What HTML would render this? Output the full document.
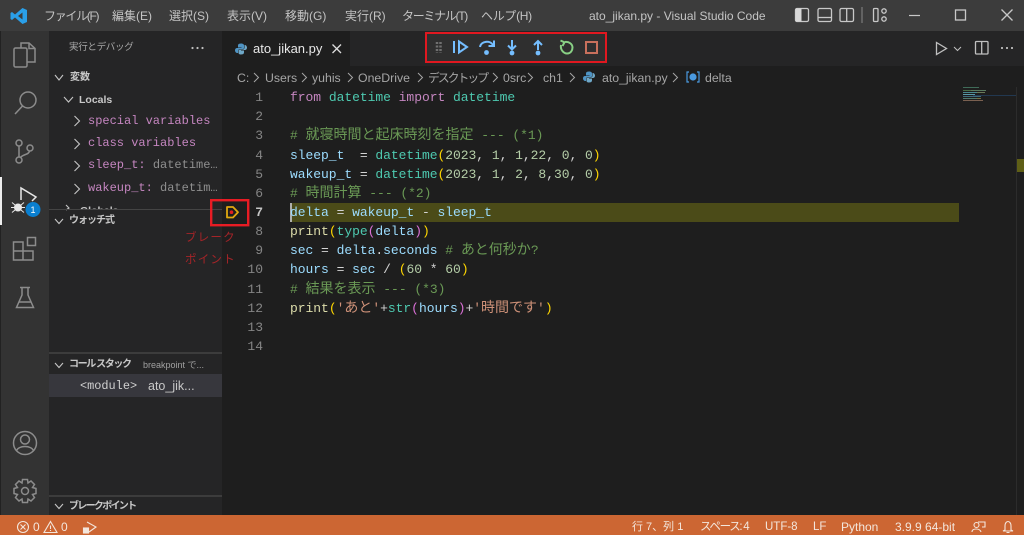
<!DOCTYPE html>
<html lang="ja"><head><meta charset="utf-8">
<style>
html,body{margin:0;padding:0;width:1024px;height:535px;overflow:hidden;background:#1e1e1e}
body{position:relative;font-family:"Liberation Sans","Noto Sans CJK JP",sans-serif;color:#ccc;filter:blur(.35px)}
.a{position:absolute;white-space:pre}
svg{position:absolute;overflow:visible}
.m{font-size:12px;color:#c4c4c4;top:8px;line-height:16px}
.code{position:absolute;left:290px;font:13px/19px "Liberation Mono","Noto Sans CJK JP",monospace;letter-spacing:-.04px;white-space:pre;color:#d4d4d4}
.j{font-size:14px;letter-spacing:0}
.ln{position:absolute;width:28px;left:235px;text-align:right;font:13px/19px "Liberation Mono",monospace;color:#858585}
.v{color:#9cdcfe}.t{color:#4ec9b0}.k{color:#c586c0}.c{color:#6a9955}.n{color:#b5cea8}.f{color:#dcdcaa}.s{color:#ce9178}.y{color:#ffd700}.p{color:#da70d6}
.tree{position:absolute;font:12px/18px "Liberation Mono",monospace;color:#c586c0;white-space:pre}
.h{position:absolute;font-size:10px;font-weight:bold;color:#c8c8c8;line-height:14px;white-space:pre}
.st{position:absolute;top:520px;font-size:11.5px;line-height:15px;color:#f3e6dc;white-space:pre}
.b{position:absolute;top:70px;font-size:12.3px;line-height:16px;color:#a6a6a6;white-space:pre}
</style></head><body>
<!-- panels -->
<div class="a" style="left:0;top:0;width:1024px;height:31px;background:#3c3c3c"></div>
<div class="a" style="left:0;top:31px;width:49px;height:484px;background:#333"></div>
<div class="a" style="left:49px;top:31px;width:173px;height:484px;background:#252526"></div>
<div class="a" style="left:222px;top:31px;width:802px;height:35px;background:#252526"></div>
<div class="a" style="left:222px;top:31px;width:128px;height:35px;background:#1e1e1e"></div>
<div class="a" style="left:0;top:31px;width:1px;height:484px;background:#222"></div>
<div class="a" style="left:0;top:177px;width:2px;height:48px;background:#eee"></div>
<div class="a" style="left:0;top:515px;width:1024px;height:20px;background:#cc6633"></div>
<!-- title -->
<svg style="left:10px;top:7px" width="18" height="18" viewBox="0 0 18 18"><path d="M12.5 1 L17 3 V15 L12.5 17 L5 10.5 L2 13 L0.5 12 V6 L2 5 L5 7.5Z M12.5 5.5 L8 9 L12.5 12.5Z" fill="#2a9fe8" fill-rule="evenodd"/></svg>
<div class="a m" style="left:44px;letter-spacing:-1.3px">ファイル(F)</div>
<div class="a m" style="left:112px">編集(E)</div>
<div class="a m" style="left:169px">選択(S)</div>
<div class="a m" style="left:227px">表示(V)</div>
<div class="a m" style="left:285px">移動(G)</div>
<div class="a m" style="left:345px">実行(R)</div>
<div class="a m" style="left:402px;letter-spacing:-1.3px">ターミナル(T)</div>
<div class="a m" style="left:481px;letter-spacing:-.3px">ヘルプ(H)</div>
<div class="a m" style="left:589px">ato_jikan.py - Visual Studio Code</div>
<svg style="left:794px;top:7px" width="230" height="20" fill="none" stroke="#c8c8c8" stroke-width="1.3">
<rect x="1.500" y="1.500" width="13" height="13" rx="1.500"/><rect x="1.500" y="1.500" width="6" height="13" fill="#d8d8d8" stroke="none"/>
<rect x="24" y="1.500" width="13.500" height="13" rx="1.500"/><path d="M24 10.500H37.500"/>
<rect x="46" y="1.500" width="13.500" height="13" rx="1.500"/><path d="M52.700 1.500V14.500"/>
<path d="M68 0V16" stroke="#777"/>
<rect x="79.500" y="1.500" width="4.500" height="13" rx="1"/><circle cx="90" cy="4" r="2.200"/><circle cx="90" cy="12" r="2.200"/>
<path d="M115 8.500H126" stroke-width="1.200"/>
<rect x="161.500" y="3" width="10" height="10" stroke-width="1.300"/>
<path d="M207.500 2.500L218.500 13.500M218.500 2.500L207.500 13.500" stroke-width="1.300"/></svg>
<!-- activity icons -->
<svg style="left:0;top:31px" width="49" height="485" fill="none" stroke="#8c8c8c" stroke-width="1.500">
<path d="M21 17V12H29L35 17.500V31H27"/><path d="M29 12V17.500H35"/><rect x="14" y="17" width="13" height="19" rx="1.500"/>
<circle cx="28" cy="69" r="8"/><path d="M22.500 75L15 83"/>
<circle cx="19" cy="112" r="3"/><circle cx="19" cy="129" r="3"/><circle cx="30" cy="117" r="3"/><path d="M19 115V126M29.500 120C29 124 23 123 20.500 126.500"/>
<path d="M13.500 229V211H23V220H33V229ZM13.500 220H33M23 220V229"/><rect x="27.500" y="206.500" width="8" height="8"/>
<path d="M22 256.500V264L16.500 276.500H33.500L28 264V256.500M20 256.500H30M19 271H31"/>
<circle cx="25" cy="412" r="11.500"/><circle cx="25" cy="408.500" r="4.500"/><path d="M16.500 420C18 414 32 414 33.500 420"/>
<circle cx="25" cy="460" r="3.500"/><path d="M22.500 448.500H27.500L28 452L31 450L34.500 453.500L32.500 456.500L36 457.500V462.500L32.500 463.500L34.500 466.500L31 470L28 468L27.500 471.500H22.500L22 468L19 470L15.500 466.500L17.500 463.500L14 462.500V457.500L17.500 456.500L15.500 453.500L19 450L22 452Z"/>
</svg>
<svg style="left:0;top:0" width="49" height="240" fill="none" stroke="#e8e8e8" stroke-width="1.500">
<path d="M21 200V188L36 197L32 201"/>
<circle cx="18" cy="207.500" r="4" fill="#e8e8e8" stroke="none"/><path d="M12 202.500L24 212.500M12 212.500L24 202.500M11 207.500H25" stroke-width="1"/>
<circle cx="33" cy="209.500" r="7.500" fill="#0a7fd0" stroke="none"/></svg>
<div class="a" style="left:29px;top:204px;width:8px;text-align:center;font-size:9px;line-height:12px;color:#fff">1</div>
<!-- sidebar -->
<div class="a" style="left:69px;top:41px;font-size:9.500px;line-height:14px;color:#a8a8a8;letter-spacing:-.3px">実行とデバッグ</div>
<svg style="left:191px;top:47px" width="14" height="3" fill="#c0c0c0"><circle cx="1.500" cy="1" r="1.100"/><circle cx="6.500" cy="1" r="1.100"/><circle cx="11.500" cy="1" r="1.100"/></svg>
<svg style="left:49px;top:60px" width="173" height="460" fill="none" stroke="#c5c5c5" stroke-width="1.100">
<path d="M6 15L10 20L14 15"/><path d="M15 37L19.500 42L24 37"/>
<path d="M25.500 56L30.500 61L25.500 66M25.500 79L30.500 84L25.500 89M25.500 101L30.500 106L25.500 111M25.500 124L30.500 129L25.500 134"/>
<path d="M17 145L20 148L17 150"/>
<path d="M6 159L10 163.500L14 159M6 303L10 307.500L14 303M6 444L10 448.500L14 444"/>
</svg>
<div class="h" style="left:70px;top:71px">変数</div>
<div class="h" style="left:79px;top:93px;font-size:10.500px">Locals</div>
<div class="tree" style="left:88px;top:112px">special variables</div>
<div class="tree" style="left:88px;top:134px">class variables</div>
<div class="tree" style="left:88px;top:156px">sleep_t: <span style="color:#8f8f8f">datetime…</span></div>
<div class="tree" style="left:88px;top:179px">wakeup_t: <span style="color:#8f8f8f">datetim…</span></div>
<div class="a" style="left:80px;top:204px;width:40px;height:5px;overflow:hidden;font-size:10.500px;font-weight:bold;line-height:14px;color:#c8c8c8">Globals</div>
<div class="a" style="left:49px;top:209px;width:173px;height:1px;background:#444"></div>
<div class="h" style="left:69px;top:214px;letter-spacing:-1px">ウォッチ式</div>
<div class="a" style="left:49px;top:352px;width:173px;height:2px;background:#3c3c3c"></div>
<div class="h" style="left:69px;top:358px;letter-spacing:-1.400px">コール スタック</div>
<div class="a" style="left:143px;top:358px;font-size:9px;line-height:14px;color:#a0a0a0">breakpoint で...</div>
<div class="a" style="left:49px;top:374px;width:173px;height:23px;background:#37373d"></div>
<div class="a" style="left:80px;top:378px;font:11.900px/16px 'Liberation Mono',monospace;color:#d0d0d0">&lt;module&gt;</div>
<div class="a" style="left:148px;top:378px;font-size:12.500px;line-height:16px;color:#c8c8c8">ato_jik...</div>
<div class="a" style="left:49px;top:495px;width:173px;height:2px;background:#3c3c3c"></div>
<div class="h" style="left:69px;top:500px;letter-spacing:-1.700px">ブレークポイント</div>
<!-- annotation -->
<div class="a" style="left:185px;top:230px;font-size:11.500px;line-height:16px;color:#a52428;letter-spacing:1.200px">ブレーク</div>
<div class="a" style="left:185px;top:252px;font-size:11.500px;line-height:16px;color:#a52428;letter-spacing:1.200px">ポイント</div>
<svg style="left:210px;top:199px" width="40" height="28" fill="none">
<rect x="1.200" y="1.200" width="37" height="25" stroke="#e81c24" stroke-width="2.400"/>
<path d="M17 8H23L28 13.200L23 18.500H17Z" stroke="#e0a810" stroke-width="1.800" stroke-linejoin="round"/><circle cx="21.500" cy="13.200" r="1.800" fill="#e02020"/></svg>
<!-- tab -->
<svg style="left:235px;top:43px" width="12" height="12"><path d="M6 0.500C3 0.500 3 2 3 3V4.500H6.500V5H2C.5 5 0 6.500 0 7.500S1 10 2 10H3V8C3 7 4 6 5 6H8C9 6 9 5 9 4.500V2.500C9 1 7.500 .5 6 .5Z" fill="#4f94c4"/><path d="M6 11.500C9 11.500 9 10 9 9V7.500H6V7H10C11.500 7 12 5.500 12 4.500S11 2 10 2H9.500V4.500C9.500 5.500 9 6.500 8 6.500H5C4 6.500 3.500 7 3.500 8V9.500C3.500 11 4.500 11.500 6 11.500Z" fill="#6fa8c8"/></svg>
<div class="a" style="left:253px;top:41px;font-size:13px;line-height:16px;color:#e8e8e8">ato_jikan.py</div>
<svg style="left:332px;top:44px" width="10" height="10" fill="none" stroke="#ddd" stroke-width="1.300"><path d="M.5 .5L9 9M9 .5L.5 9"/></svg>
<!-- debug toolbar -->
<div class="a" style="left:425px;top:32px;width:178px;height:27px;background:#2f2f2f;border:2.500px solid #e01820"></div>
<svg style="left:425px;top:30px" width="185" height="36" fill="none" stroke="#75beff" stroke-width="2">
<path d="M12 12V23M15.500 12V23" stroke="#707070" stroke-width="2.500" stroke-dasharray="2 1.500"/>
<path d="M29 11V23" /><path d="M34 11.500L42 17L34 22.500Z"/>
<path d="M55 17C56 11 65 10 68 15M69 10.500V16H63.500" /><circle cx="61.500" cy="22.500" r="2.400" fill="#75beff" stroke="none"/>
<path d="M87 10V19M83 15.500L87 19.500L91 15.500"/><circle cx="87" cy="23" r="2.400" fill="#75beff" stroke="none"/>
<path d="M113 20V11M109 15L113 11L117 15"/><circle cx="113" cy="23" r="2.400" fill="#75beff" stroke="none"/>
<path d="M136 15C135 20 139 23.500 142 23.500C146 23.500 147.500 20 147.500 17.500C147.500 14 144 11.500 140 12M135.500 10.500L139.500 12.300L137.500 16" stroke="#89d185"/>
<rect x="161" y="12" width="11" height="11" stroke="#c8705c"/></svg>
<!-- editor actions -->
<svg style="left:930px;top:38px" width="90" height="20" fill="none" stroke="#c0c0c0" stroke-width="1.300">
<path d="M6.500 4.500L16.500 10.500L6.500 16.500Z"/><path d="M24 9L27.500 12.500L31 9" stroke-width="1"/>
<rect x="45.500" y="3.500" width="12.500" height="12.500" rx="1"/><path d="M51.700 3.500V16"/>
<path d="M71 10H73M76 10H78M81 10H83" stroke-width="1.800"/></svg>
<!-- breadcrumb -->
<div class="b" style="left:237px">C:</div>
<div class="b" style="left:265px">Users</div>
<div class="b" style="left:312px">yuhis</div>
<div class="b" style="left:358px">OneDrive</div>
<div class="b" style="left:428px;font-size:11.800px;letter-spacing:-1.950px">デスクトップ</div>
<div class="b" style="left:503px">0src</div>
<div class="b" style="left:543px">ch1</div>
<div class="b" style="left:602px">ato_jikan.py</div>
<div class="b" style="left:705px">delta</div>
<svg style="left:0;top:0" width="700" height="90" fill="none" stroke="#a6a6a6" stroke-width="1"><path d="M254 73L258.500 77.500L254 82M302 73L306.500 77.500L302 82M348 73L352.500 77.500L348 82M418 73L422.500 77.500L418 82M493 73L497.500 77.500L493 82M528 73L532.500 77.500L528 82M570 73L574.500 77.500L570 82M673 73L677.500 77.500L673 82"/></svg>
<svg style="left:583px;top:71px" width="12" height="12"><path d="M6 0.500C3 .5 3 2 3 3V4.500H6.500V5H2C.5 5 0 6.500 0 7.500S1 10 2 10H3V8C3 7 4 6 5 6H8C9 6 9 5 9 4.500V2.500C9 1 7.500 .5 6 .5Z" fill="#4f94c4"/><path d="M6 11.500C9 11.500 9 10 9 9V7.500H6V7H10C11.500 7 12 5.500 12 4.500S11 2 10 2H9.500V4.500C9.500 5.500 9 6.500 8 6.500H5C4 6.500 3.500 7 3.500 8V9.500C3.500 11 4.500 11.500 6 11.500Z" fill="#6fa8c8"/></svg>
<svg style="left:686px;top:71px" width="15" height="12" fill="none" stroke="#4a9ae0" stroke-width="1.200"><path d="M3 1H1V11H3M11 1H13V11H11"/><circle cx="7" cy="6" r="3" fill="#4a9ae0"/></svg>
<!-- highlight -->
<div class="a" style="left:290px;top:203px;width:669px;height:19px;background:#4b4b18"></div>
<div class="a" style="left:290px;top:203px;width:2px;height:19px;background:#aeafad"></div>
<!-- line numbers -->
<div class="ln" style="top:88px">1</div><div class="ln" style="top:107px">2</div><div class="ln" style="top:126px">3</div><div class="ln" style="top:146px">4</div><div class="ln" style="top:165px">5</div><div class="ln" style="top:184px">6</div><div class="ln" style="top:203px;color:#c6c6c6;font-weight:bold">7</div><div class="ln" style="top:222px">8</div><div class="ln" style="top:241px">9</div><div class="ln" style="top:260px">10</div><div class="ln" style="top:280px">11</div><div class="ln" style="top:299px">12</div><div class="ln" style="top:318px">13</div><div class="ln" style="top:337px">14</div>
<!-- code -->
<div class="code" style="top:88px"><span class="k">from</span> <span class="t">datetime</span> <span class="k">import</span> <span class="t">datetime</span></div>
<div class="code c" style="top:126px"># <span class="j">就寝時間と起床時刻を指定</span> --- (*1)</div>
<div class="code" style="top:146px"><span class="v">sleep_t</span>  = <span class="t">datetime</span><span class="y">(</span><span class="n">2023</span>, <span class="n">1</span>, <span class="n">1</span>,<span class="n">22</span>, <span class="n">0</span>, <span class="n">0</span><span class="y">)</span></div>
<div class="code" style="top:165px"><span class="v">wakeup_t</span> = <span class="t">datetime</span><span class="y">(</span><span class="n">2023</span>, <span class="n">1</span>, <span class="n">2</span>, <span class="n">8</span>,<span class="n">30</span>, <span class="n">0</span><span class="y">)</span></div>
<div class="code c" style="top:184px"># <span class="j">時間計算</span> --- (*2)</div>
<div class="code" style="top:203px"><span class="v">delta</span> = <span class="v">wakeup_t</span> - <span class="v">sleep_t</span></div>
<div class="code" style="top:222px"><span class="f">print</span><span class="y">(</span><span class="t">type</span><span class="p">(</span><span class="v">delta</span><span class="p">)</span><span class="y">)</span></div>
<div class="code" style="top:241px"><span class="v">sec</span> = <span class="v">delta</span>.<span class="v">seconds</span> <span class="c"># <span class="j">あと何秒か</span>?</span></div>
<div class="code" style="top:260px"><span class="v">hours</span> = <span class="v">sec</span> / <span class="y">(</span><span class="n">60</span> * <span class="n">60</span><span class="y">)</span></div>
<div class="code c" style="top:280px"># <span class="j">結果を表示</span> --- (*3)</div>
<div class="code" style="top:299px"><span class="f">print</span><span class="y">(</span><span class="s">'<span class="j">あと</span>'</span>+<span class="t">str</span><span class="p">(</span><span class="v">hours</span><span class="p">)</span>+<span class="s">'<span class="j">時間です</span>'</span><span class="y">)</span></div>
<!-- minimap -->
<svg style="left:963px;top:87px" width="61" height="16" fill="none" stroke-width="1">
<path d="M0 .5H16" stroke="#3f6b58"/><path d="M0 3.500H8" stroke="#4a6e48"/><path d="M8 3.500H23" stroke="#5a7a60"/>
<path d="M0 5.500H14" stroke="#4a8a90"/><path d="M14 5.500H22" stroke="#6a7a5a"/><path d="M0 7.500H12" stroke="#5a9aa8"/>
<path d="M0 9.500H18" stroke="#3e6a7a"/><path d="M0 11.500H14" stroke="#50786a"/><path d="M14 11.500H18" stroke="#7a7040"/>
<path d="M0 13.500H20" stroke="#7a6050"/><path d="M10 8.500H54" stroke="#223850"/></svg>
<div class="a" style="left:1016px;top:87px;width:1px;height:428px;background:#2c2c2c"></div>
<div class="a" style="left:1017px;top:159px;width:7px;height:13px;background:#5f5f16"></div>
<!-- status -->
<svg style="left:16px;top:520px" width="90" height="15" fill="none" stroke="#f3e6dc" stroke-width="1.100">
<circle cx="7" cy="7" r="5.500"/><path d="M4.500 4.500L9.500 9.500M9.500 4.500L4.500 9.500"/>
<path d="M34.500 1.500L41 12.500H28ZM34.500 5.500V9M34.500 10V11"/></svg>
<svg style="left:82px;top:520px" width="16" height="15" fill="none" stroke="#f3e6dc" stroke-width="1.100"><path d="M5 2L14 7L7 12"/><rect x="1.500" y="8" width="5" height="5" fill="#f3e6dc"/></svg>
<div class="st" style="left:33px;font-size:12px">0</div><div class="st" style="left:61px;font-size:12px">0</div>
<div class="st" style="left:632px;font-size:11px">行 7、列 1</div>
<div class="st" style="left:700px;letter-spacing:-1.300px">スペース: 4</div>
<div class="st" style="left:765px">UTF-8</div>
<div class="st" style="left:813px">LF</div>
<div class="st" style="left:841px;font-size:12px">Python</div>
<div class="st" style="left:895px;font-size:12px">3.9.9 64-bit</div>
<svg style="left:970px;top:519px" width="50" height="16" fill="none" stroke="#f3e6dc" stroke-width="1.100">
<circle cx="6.500" cy="6" r="2.500"/><path d="M2 13C2 9 10 9 11 13M8 3H15V8H12"/>
<path d="M35 11V7C35 4 36.500 2.500 38 2.500S41 4 41 7V11L43 12H33ZM36.500 13.500H39.500"/></svg>
</body></html>
